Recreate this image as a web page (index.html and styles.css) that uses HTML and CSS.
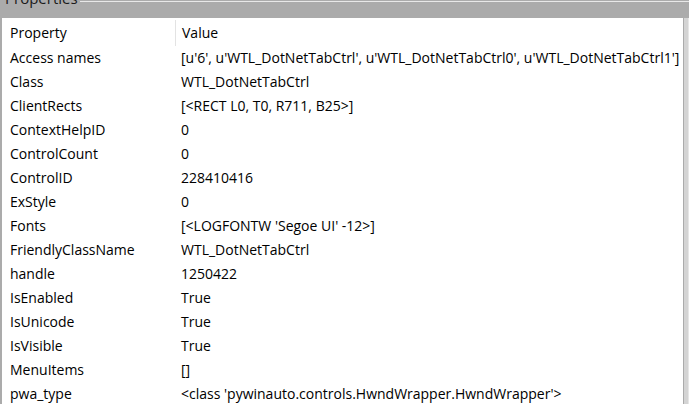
FILE: index.html
```html
<!DOCTYPE html>
<html>
<head>
<meta charset="utf-8">
<link rel="stylesheet" href="styles.css">
</head>
<body>
<div class="window">
  <div class="groupbar">
    <span class="grouptitle">Properties</span>
    <span class="groupline"></span>
  </div>
  <div class="content">
    <div class="panel">
      <div class="row header">
        <div class="prop">Property</div>
        <div class="val sep">Value</div>
      </div>
      <div class="row"><div class="prop">Access names</div><div class="val">[u'6', u'WTL_DotNetTabCtrl', u'WTL_DotNetTabCtrl0', u'WTL_DotNetTabCtrl1']</div></div>
      <div class="row"><div class="prop">Class</div><div class="val">WTL_DotNetTabCtrl</div></div>
      <div class="row"><div class="prop">ClientRects</div><div class="val">[&lt;RECT L0, T0, R711, B25&gt;]</div></div>
      <div class="row"><div class="prop">ContextHelpID</div><div class="val">0</div></div>
      <div class="row"><div class="prop">ControlCount</div><div class="val">0</div></div>
      <div class="row"><div class="prop">ControlID</div><div class="val">228410416</div></div>
      <div class="row"><div class="prop">ExStyle</div><div class="val">0</div></div>
      <div class="row"><div class="prop">Fonts</div><div class="val">[&lt;LOGFONTW 'Segoe UI' -12&gt;]</div></div>
      <div class="row"><div class="prop">FriendlyClassName</div><div class="val">WTL_DotNetTabCtrl</div></div>
      <div class="row"><div class="prop">handle</div><div class="val">1250422</div></div>
      <div class="row"><div class="prop">IsEnabled</div><div class="val">True</div></div>
      <div class="row"><div class="prop">IsUnicode</div><div class="val">True</div></div>
      <div class="row"><div class="prop">IsVisible</div><div class="val">True</div></div>
      <div class="row"><div class="prop">MenuItems</div><div class="val">[]</div></div>
      <div class="row"><div class="prop">pwa_type</div><div class="val">&lt;class 'pywinauto.controls.HwndWrapper.HwndWrapper'&gt;</div></div>
    </div>
    <div class="scrollstrip"></div>
  </div>
</div>
</body>
</html>
```
FILE: styles.css
```css
html, body {
  margin: 0;
  padding: 0;
  background: #ffffff;
  overflow: hidden;
}
.window {
  width: 689px;
  height: 404px;
  font-family: "Open Sans", "Segoe UI", "Noto Sans", sans-serif;
  font-size: 14px;
  color: #000;
  background: #ababab;
  overflow: hidden;
}
.groupbar {
  height: 18px;
  display: flex;
  align-items: flex-start;
  background: #ababab;
}
.grouptitle {
  margin-left: 5px;
  margin-top: -12px;
  font-size: 15px;
  line-height: 20px;
  color: #1a1a1a;
}
.groupline {
  flex: 1;
  height: 1px;
  margin-top: 1px;
  margin-left: 2px;
  background: #e8e8e8;
}
.content {
  display: flex;
  height: 386px;
  padding-left: 2px;
  background: #ababab;
}
.panel {
  width: 682px;
  background: #ffffff;
  padding-top: 2px;
}
.scrollstrip {
  width: 4px;
  margin-left: 1px;
  background: #d4d4d4;
  border-right: 1px solid #e6e6e6;
  flex: none;
}
.row {
  display: flex;
  height: 24px;
  line-height: 24px;
  white-space: nowrap;
}
.row.header {
  height: 26px;
  line-height: 25px;
}
.prop {
  width: 165px;
  padding-left: 8px;
  flex: none;
}
.val {
  padding-left: 6px;
}
.val.sep {
  border-left: 1px solid #e3e3e3;
}
```
